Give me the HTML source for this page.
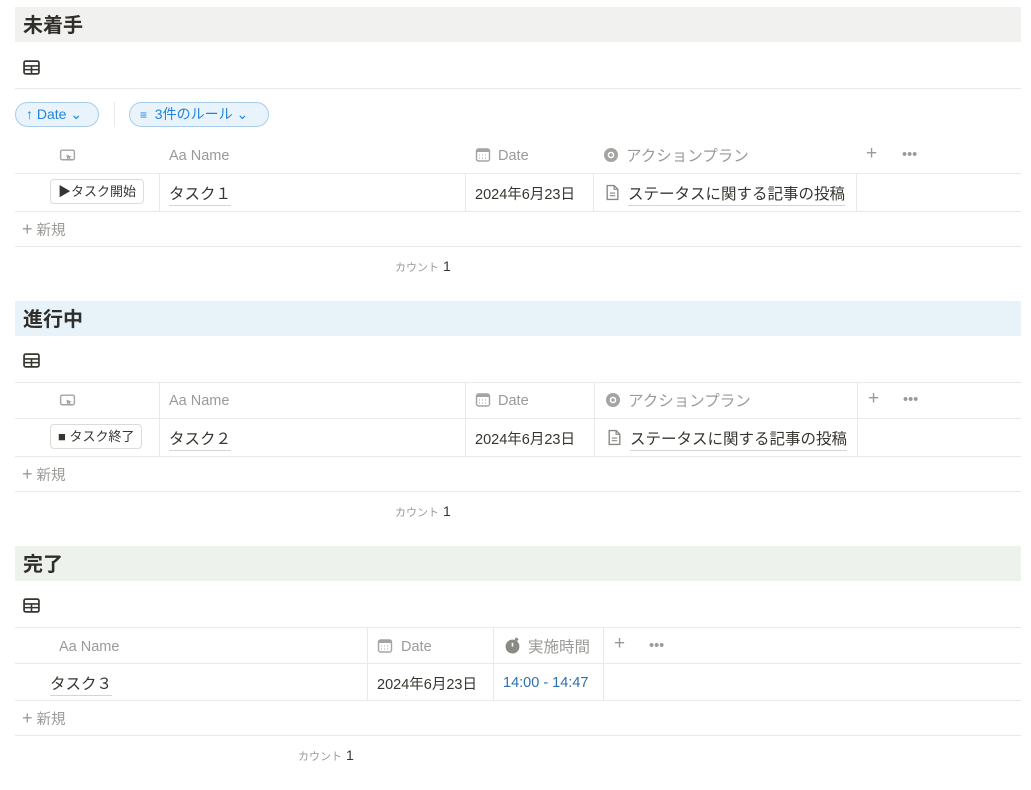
<!DOCTYPE html>
<html><head><meta charset="utf-8"><style>
*{margin:0;padding:0;box-sizing:border-box}
body{width:1031px;height:790px;background:#fff;font-family:"Liberation Sans","Noto Sans CJK JP",sans-serif;color:#37352f;position:relative;overflow:hidden}
.a{position:absolute}
.bar{left:15px;width:1006px;height:35px}
.bar span{position:absolute;left:8px;top:2px;font-size:20px;font-weight:bold;color:#2f2e2a}
.hl{position:absolute;left:15px;width:1006px;height:1px;background:#e9e9e7}
.vl{position:absolute;width:1px;background:#e9e9e7}
.hd{font-size:14.5px;color:#9b9a97;white-space:nowrap}
.tx{font-size:14.5px;color:#37352f;white-space:nowrap}
.u{border-bottom:1px solid #d6d5d1;padding-bottom:1px}
.pill{border:1px solid #a8cdea;background:#e9f3fb;color:#2383e2;border-radius:13px;height:25px;font-size:14px;line-height:23px;padding:0 10px;white-space:nowrap}
.btn{border:1px solid #dcdbd8;border-radius:4px;height:25px;font-size:13px;line-height:23px;padding:0 7px;background:#fff;white-space:nowrap}
.cnt{font-size:11px;color:#9b9a97;white-space:nowrap}
.cnt b{font-weight:normal;font-size:14px;color:#37352f;margin-left:4px}
</style></head><body>
<svg width="0" height="0" style="position:absolute"><defs>
<symbol id="tbl" viewBox="0 0 16 16"><rect x="1" y="2" width="14" height="12" rx="1.5" fill="none" stroke="#37352f" stroke-width="1.6"/><path d="M1 6.5h14M1 10h14M8 6.5V14" stroke="#37352f" stroke-width="1.5"/></symbol>
<symbol id="cal" viewBox="0 0 16 16"><rect x="1.5" y="2" width="13" height="12" rx="2" fill="none" stroke="#a5a4a1" stroke-width="1.4"/><rect x="1.5" y="2" width="13" height="3" fill="#a5a4a1"/><path d="M4 8h1M7 8h1M10 8h1M4 11h1M7 11h1M10 11h1" stroke="#a5a4a1"/></symbol>
<symbol id="rel" viewBox="0 0 16 16"><circle cx="8" cy="8" r="7" fill="#a5a4a1"/><circle cx="8" cy="8" r="3.3" fill="#fff"/><circle cx="8" cy="8" r="1.8" fill="#a5a4a1"/></symbol>
<symbol id="btnc" viewBox="0 0 16 16"><rect x="1.5" y="3" width="13" height="9" rx="1.5" fill="none" stroke="#a5a4a1" stroke-width="1.3"/><path d="M7 7l5 2-2 .8 2 2.5-1 .7-2-2.5-1.3 1.5z" fill="#a5a4a1"/></symbol>
<symbol id="doc" viewBox="0 0 16 16"><path d="M3 1.5h6.5L13 5v9.5H3z" fill="none" stroke="#8a8985" stroke-width="1.3"/><path d="M9.5 1.5V5H13M5.5 8.5h5M5.5 11h5" stroke="#8a8985" stroke-width="1.1" fill="none"/></symbol>
<symbol id="tmr" viewBox="0 0 16 16"><circle cx="8" cy="9" r="6.5" fill="#8a8985"/><path d="M8 9V5.5" stroke="#fff" stroke-width="1.5"/><rect x="10.5" y="1" width="3" height="2.5" fill="#8a8985" transform="rotate(40 12 2)"/></symbol>
</defs></svg>

<!-- Section 1 -->
<div class="a bar" style="top:7px;background:#f1f1ef"><span>未着手</span></div>
<svg class="a" style="left:23px;top:59px" width="17" height="17"><use href="#tbl"/></svg>
<div class="hl" style="top:88px"></div>
<div class="a pill" style="left:15px;top:102px;width:84px">↑ Date ⌄</div>
<div class="a" style="left:114px;top:102px;width:1px;height:25px;background:#e9e9e7"></div>
<div class="a pill" style="left:129px;top:102px;width:140px"><span style="font-size:12px">≡</span>&nbsp; 3件のルール ⌄</div>
<svg class="a" style="left:59px;top:147px" width="17" height="17"><use href="#btnc"/></svg>
<div class="a hd" style="left:169px;top:148px">Aa Name</div>
<svg class="a" style="left:475px;top:147px" width="16" height="16"><use href="#cal"/></svg>
<div class="a hd" style="left:498px;top:148px">Date</div>
<svg class="a" style="left:603px;top:147px" width="16" height="16"><use href="#rel"/></svg>
<div class="a hd" style="left:626px;top:144px;font-size:15.5px">アクションプラン</div>
<div class="a hd" style="left:866px;top:143px;font-size:19px;font-weight:300">+</div>
<div class="a hd" style="left:902px;top:147px">•••</div>
<div class="hl" style="top:173px"></div>
<div class="vl" style="left:159px;top:173px;height:38px"></div>
<div class="vl" style="left:465px;top:173px;height:38px"></div>
<div class="vl" style="left:593px;top:173px;height:38px"></div>
<div class="vl" style="left:856px;top:173px;height:38px"></div>
<div class="a btn" style="left:50px;top:179px">▶タスク開始</div>
<div class="a tx u" style="left:169px;top:182px;font-size:15.5px">タスク１</div>
<div class="a tx" style="left:475px;top:183px">2024年6月23日</div>
<svg class="a" style="left:604px;top:184px" width="17" height="17"><use href="#doc"/></svg>
<div class="a tx u" style="left:628px;top:182px;font-size:15.5px">ステータスに関する記事の投稿</div>
<div class="hl" style="top:211px"></div>
<div class="a hd" style="left:22px;top:219px"><span style="font-size:18px;font-weight:300">+</span> 新規</div>
<div class="hl" style="top:246px"></div>
<div class="a cnt" style="left:395px;top:258px">カウント<b>1</b></div>

<!-- Section 2 -->
<div class="a bar" style="top:301px;background:#e7f3f8"><span>進行中</span></div>
<svg class="a" style="left:23px;top:352px" width="17" height="17"><use href="#tbl"/></svg>
<div class="hl" style="top:382px"></div>
<div class="vl" style="left:159px;top:382px;height:74px"></div>
<div class="vl" style="left:465px;top:382px;height:74px"></div>
<div class="vl" style="left:594px;top:382px;height:74px"></div>
<div class="vl" style="left:857px;top:382px;height:74px"></div>
<svg class="a" style="left:59px;top:392px" width="17" height="17"><use href="#btnc"/></svg>
<div class="a hd" style="left:169px;top:393px">Aa Name</div>
<svg class="a" style="left:475px;top:392px" width="16" height="16"><use href="#cal"/></svg>
<div class="a hd" style="left:498px;top:393px">Date</div>
<svg class="a" style="left:605px;top:392px" width="16" height="16"><use href="#rel"/></svg>
<div class="a hd" style="left:628px;top:389px;font-size:15.5px">アクションプラン</div>
<div class="a hd" style="left:868px;top:388px;font-size:19px;font-weight:300">+</div>
<div class="a hd" style="left:903px;top:392px">•••</div>
<div class="hl" style="top:418px"></div>
<div class="a btn" style="left:50px;top:424px">■ タスク終了</div>
<div class="a tx u" style="left:169px;top:427px;font-size:15.5px">タスク２</div>
<div class="a tx" style="left:475px;top:428px">2024年6月23日</div>
<svg class="a" style="left:606px;top:429px" width="17" height="17"><use href="#doc"/></svg>
<div class="a tx u" style="left:630px;top:427px;font-size:15.5px">ステータスに関する記事の投稿</div>
<div class="hl" style="top:456px"></div>
<div class="a hd" style="left:22px;top:464px"><span style="font-size:18px;font-weight:300">+</span> 新規</div>
<div class="hl" style="top:491px"></div>
<div class="a cnt" style="left:395px;top:503px">カウント<b>1</b></div>

<!-- Section 3 -->
<div class="a bar" style="top:546px;background:#edf3ec"><span>完了</span></div>
<svg class="a" style="left:23px;top:597px" width="17" height="17"><use href="#tbl"/></svg>
<div class="hl" style="top:627px"></div>
<div class="vl" style="left:367px;top:627px;height:73px"></div>
<div class="vl" style="left:493px;top:627px;height:73px"></div>
<div class="vl" style="left:603px;top:627px;height:73px"></div>
<div class="a hd" style="left:59px;top:639px">Aa Name</div>
<svg class="a" style="left:377px;top:638px" width="16" height="16"><use href="#cal"/></svg>
<div class="a hd" style="left:401px;top:639px">Date</div>
<svg class="a" style="left:504px;top:637px" width="17" height="17"><use href="#tmr"/></svg>
<div class="a hd" style="left:528px;top:635px;font-size:15.5px">実施時間</div>
<div class="a hd" style="left:614px;top:633px;font-size:19px;font-weight:300">+</div>
<div class="a hd" style="left:649px;top:638px">•••</div>
<div class="hl" style="top:663px"></div>
<div class="a tx u" style="left:50px;top:672px;font-size:15.5px">タスク３</div>
<div class="a tx" style="left:377px;top:673px">2024年6月23日</div>
<div class="a tx" style="left:503px;top:675px;color:#2f6fad">14:00 - 14:47</div>
<div class="hl" style="top:700px"></div>
<div class="a hd" style="left:22px;top:708px"><span style="font-size:18px;font-weight:300">+</span> 新規</div>
<div class="hl" style="top:735px"></div>
<div class="a cnt" style="left:298px;top:747px">カウント<b>1</b></div>
</body></html>
